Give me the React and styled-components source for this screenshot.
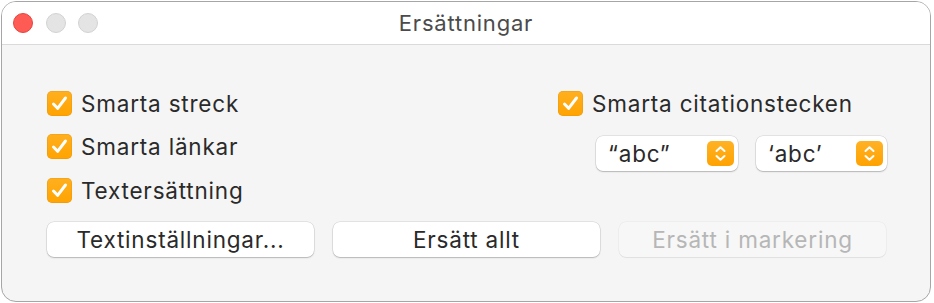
import React from "react";
import styled, { createGlobalStyle } from "styled-components";

const Global = createGlobalStyle`
  html, body { margin: 0; padding: 0; background: #ffffff; }
  body { font-family: Inter, "Liberation Sans", Arial, sans-serif; -webkit-font-smoothing: antialiased; }
  * { box-sizing: border-box; }
`;

const Window = styled.div`
  margin: 1px 0 0 1px;
  width: 930px;
  height: 301px;
  border: 1px solid #a6a6a6;
  border-radius: 15px;
  overflow: hidden;
  display: flex;
  flex-direction: column;
  background: #f5f5f5;
`;

const TitleBar = styled.div`
  height: 43px;
  flex: none;
  background: #ffffff;
  border-bottom: 1px solid #dadada;
  display: grid;
  grid-template-columns: 1fr auto 1fr;
  align-items: center;
`;

const Lights = styled.div`
  display: flex;
  gap: 12.5px;
  padding-left: 11px;
`;

const Light = styled.span`
  width: 20px;
  height: 20px;
  border-radius: 50%;
  background: ${(p) => (p.$red ? "#ff5b55" : "#e4e4e4")};
  border: 1px solid ${(p) => (p.$red ? "#e5443e" : "#d2d2d2")};
`;

const Title = styled.div`
  font-size: 22px;
  letter-spacing: 0.8px;
  color: #4b4b4b;
`;

const Body = styled.div`
  flex: 1;
  padding: 45px 44px 0 45px;
  display: flex;
  flex-direction: column;
`;

const Top = styled.div`
  display: grid;
  grid-template-columns: 511px 1fr;
`;

const Column = styled.div`
  display: flex;
  flex-direction: column;
  gap: ${(p) => p.$gap || "17.5px"};
`;

const Label = styled.label`
  display: flex;
  align-items: center;
  gap: 9px;
  height: 26px;
  font-size: 22.5px;
  letter-spacing: 0.8px;
  color: #2a2a2a;
`;

const Box = styled.span`
  width: 25px;
  height: 25px;
  border-radius: 5px;
  background: linear-gradient(#ffb020, #ffa300);
  box-shadow: inset 0 0 0 0.5px rgba(200, 120, 0, 0.35);
  display: flex;
  align-items: center;
  justify-content: center;
  flex: none;
`;

const Popups = styled.div`
  display: flex;
  gap: 18px;
  padding-left: 38px;
`;

const Popup = styled.div`
  width: ${(p) => p.$w}px;
  height: 35px;
  background: #ffffff;
  border-radius: 7px;
  box-shadow: 0 0 0 0.5px rgba(0, 0, 0, 0.14), 0 1px 1.5px rgba(0, 0, 0, 0.2);
  display: flex;
  align-items: center;
  justify-content: space-between;
  padding: 0 4px 0 12px;
  font-size: 22.5px;
  letter-spacing: 0.8px;
  color: #2a2a2a;
`;

const Stepper = styled.span`
  width: 27px;
  height: 25px;
  border-radius: 5px;
  background: linear-gradient(#ffb225, #ffa200);
  display: flex;
  align-items: center;
  justify-content: center;
`;

const Buttons = styled.div`
  margin-top: 19px;
  display: grid;
  grid-template-columns: repeat(3, 1fr);
  gap: 19px;
`;

const Button = styled.button`
  height: 35px;
  border: none;
  border-radius: 7px;
  font-family: inherit;
  font-size: 22.5px;
  letter-spacing: 0.8px;
  background: ${(p) => (p.disabled ? "#f7f7f7" : "#ffffff")};
  color: ${(p) => (p.disabled ? "#b6b6b6" : "#2a2a2a")};
  box-shadow: ${(p) =>
    p.disabled
      ? "0 0 0 0.5px rgba(0,0,0,0.06), 0 1px 1px rgba(0,0,0,0.06)"
      : "0 0 0 0.5px rgba(0,0,0,0.14), 0 1px 1.5px rgba(0,0,0,0.2)"};
  padding: 0;
`;

const Check = () => (
  <svg width="21" height="21" viewBox="0 0 21 21">
    <path d="M4.5 11 L8.6 15.3 L16.5 5" fill="none" stroke="#fff" strokeWidth="3" strokeLinecap="round" strokeLinejoin="round" />
  </svg>
);

const Chevrons = () => (
  <svg width="27" height="25" viewBox="0 0 27 25">
    <path d="M9.5 10 L13.5 6.3 L17.5 10" fill="none" stroke="#fff" strokeWidth="2" strokeLinecap="round" strokeLinejoin="round" />
    <path d="M9.5 15 L13.5 18.7 L17.5 15" fill="none" stroke="#fff" strokeWidth="2" strokeLinecap="round" strokeLinejoin="round" />
  </svg>
);

const CheckItem = ({ children }) => (
  <Label>
    <Box>
      <Check />
    </Box>
    {children}
  </Label>
);

export default function App() {
  return (
    <>
      <Global />
      <Window>
        <TitleBar>
          <Lights>
            <Light $red />
            <Light />
            <Light />
          </Lights>
          <Title>Ersättningar</Title>
          <div />
        </TitleBar>
        <Body>
          <Top>
            <Column>
              <CheckItem>Smarta streck</CheckItem>
              <CheckItem>Smarta länkar</CheckItem>
              <CheckItem>Textersättning</CheckItem>
            </Column>
            <Column $gap="20px">
              <CheckItem>Smarta citationstecken</CheckItem>
              <Popups>
                <Popup $w={142}>
                  <span>“abc”</span>
                  <Stepper>
                    <Chevrons />
                  </Stepper>
                </Popup>
                <Popup $w={131}>
                  <span>‘abc’</span>
                  <Stepper>
                    <Chevrons />
                  </Stepper>
                </Popup>
              </Popups>
            </Column>
          </Top>
          <Buttons>
            <Button>Textinställningar...</Button>
            <Button>Ersätt allt</Button>
            <Button disabled>Ersätt i markering</Button>
          </Buttons>
        </Body>
      </Window>
    </>
  );
}
